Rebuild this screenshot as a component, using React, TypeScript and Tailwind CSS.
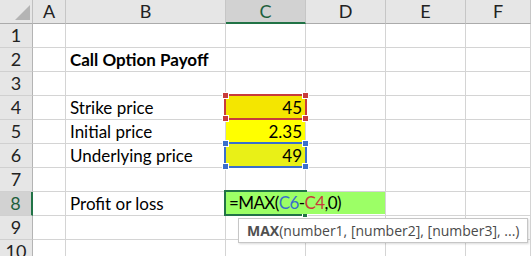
import React from "react";

const W = [33, 33, 160, 80, 80, 80, 65];
const colLetters = ["", "A", "B", "C", "D", "E", "F"];
const cellFont = { fontFamily: "Lato, 'Liberation Sans', sans-serif" };

function Header() {
  return (
    <div className="flex h-[24px]">
      {W.map((w, i) => {
        if (i === 0) {
          return (
            <div key={i} style={{ width: w }} className="relative h-[24px] shrink-0 bg-[#e6e6e6] border-r border-b border-r-[#c0c0c0] border-b-[#ababab]">
              <svg className="absolute left-[15px] top-[5px]" width="15" height="15" viewBox="0 0 15 15">
                <polygon points="15,0 15,15 0,15" fill="#b4b4b4" />
              </svg>
            </div>
          );
        }
        const sel = i === 3;
        return (
          <div
            key={i}
            style={{ width: w, ...cellFont }}
            className={
              "h-[24px] shrink-0 flex items-center justify-center text-[18px] border-r border-r-[#c6c6c6] " +
              (sel
                ? "bg-[#d2d2d2] text-[#1e5f3c] border-b-2 border-b-[#217346]"
                : "bg-[#e6e6e6] text-[#222] border-b border-b-[#ababab]")
            }
          >
            <span className={sel ? "mt-[1px]" : ""}>{colLetters[i]}</span>
          </div>
        );
      })}
    </div>
  );
}

type CellDef = {
  text?: React.ReactNode;
  bold?: boolean;
  right?: boolean;
  bg?: string;
};

function Row({ n, cells }: { n: number; cells: Record<number, CellDef> }) {
  const sel = n === 8;
  return (
    <div className="flex h-[24px]">
      <div
        style={{ width: W[0], ...cellFont }}
        className={
          "h-[24px] shrink-0 flex items-center justify-center text-[18px] border-b border-b-[#d0d0d0] " +
          (sel
            ? "bg-[#d2d2d2] text-[#1e5f3c] border-r-2 border-r-[#217346]"
            : "bg-[#e6e6e6] text-[#222] border-r border-r-[#b4b4b4]")
        }
      >
        {n}
      </div>
      {W.slice(1).map((w, j) => {
        const ci = j + 1;
        const c = cells[ci] || {};
        return (
          <div
            key={ci}
            style={{ width: w, backgroundColor: c.bg, ...cellFont }}
            className={
              "h-[24px] shrink-0 flex items-end overflow-hidden whitespace-nowrap text-[17px] leading-[22px] text-black border-r border-b border-[#d4d4d4] " +
              (c.right ? "justify-end pr-[3px] " : "pl-[4px] ") +
              (c.bold ? "font-bold" : "")
            }
          >
            {c.text}
          </div>
        );
      })}
    </div>
  );
}

function Handle({ x, y, color }: { x: number; y: number; color: string }) {
  return (
    <div
      className="absolute w-[7px] h-[7px] border border-white"
      style={{ left: x - 3, top: y - 3, backgroundColor: color }}
    />
  );
}

function RefBox({ top, color }: { top: number; color: string }) {
  const w = 83;
  const h = 26;
  return (
    <div className="absolute z-20 left-[224px]" style={{ top, width: w, height: h }}>
      <div className="w-full h-full border-2" style={{ borderColor: color }} />
      <Handle x={1} y={1} color={color} />
      <Handle x={w - 2} y={1} color={color} />
      <Handle x={1} y={h - 2} color={color} />
      <Handle x={w - 2} y={h - 2} color={color} />
    </div>
  );
}

export default function App() {
  const rows: Record<number, Record<number, CellDef>> = {
    2: { 2: { text: "Call Option Payoff", bold: true } },
    4: { 2: { text: "Strike price" }, 3: { text: "45", right: true, bg: "#f4e600" } },
    5: { 2: { text: "Initial price" }, 3: { text: "2.35", right: true, bg: "#ffff00" } },
    6: { 2: { text: "Underlying price" }, 3: { text: "49", right: true, bg: "#e9f017" } },
    8: { 2: { text: "Profit or loss" } },
  };
  return (
    <div className="relative w-[531px] h-[256px] overflow-hidden bg-white">
      <Header />
      {[1, 2, 3, 4, 5, 6, 7, 8, 9, 10].map((n) => (
        <Row key={n} n={n} cells={rows[n] || {}} />
      ))}

      <RefBox top={94} color="#c83b3b" />
      <RefBox top={142} color="#3a6fcb" />

      {/* active cell */}
      <div className="absolute z-20 left-[224px] top-[190px] w-[83px] h-[26px] border-2 border-[#217346]" />
      <div className="absolute z-20 left-[302px] top-[212px] w-[6px] h-[6px] bg-[#217346] border border-white" />

      {/* in-cell editor */}
      <div
        className="absolute z-20 left-[226px] top-[192px] w-[159px] h-[22px] bg-[#9cff66] flex items-end pl-[3px] text-[17px] leading-[22px] tracking-[-0.6px] text-black whitespace-nowrap"
        style={cellFont}
      >
        =MAX(<span className="text-[#3a6fcb]">C6</span>-<span className="text-[#c83b3b]">C4</span>,0)
      </div>

      {/* tooltip */}
      <div
        className="absolute z-30 left-[238px] top-[218px] w-[290px] h-[25px] bg-white border border-[#c6c6c6] shadow-[1px_1px_2px_rgba(0,0,0,0.15)] flex items-center pl-[8px] text-[14px] text-[#4a4a4a] whitespace-nowrap"
        style={{ fontFamily: "'Open Sans', 'Liberation Sans', sans-serif" }}
      >
        <span className="font-bold text-[#505050]">MAX</span>(number1, [number2], [number3], ...)
      </div>
    </div>
  );
}
